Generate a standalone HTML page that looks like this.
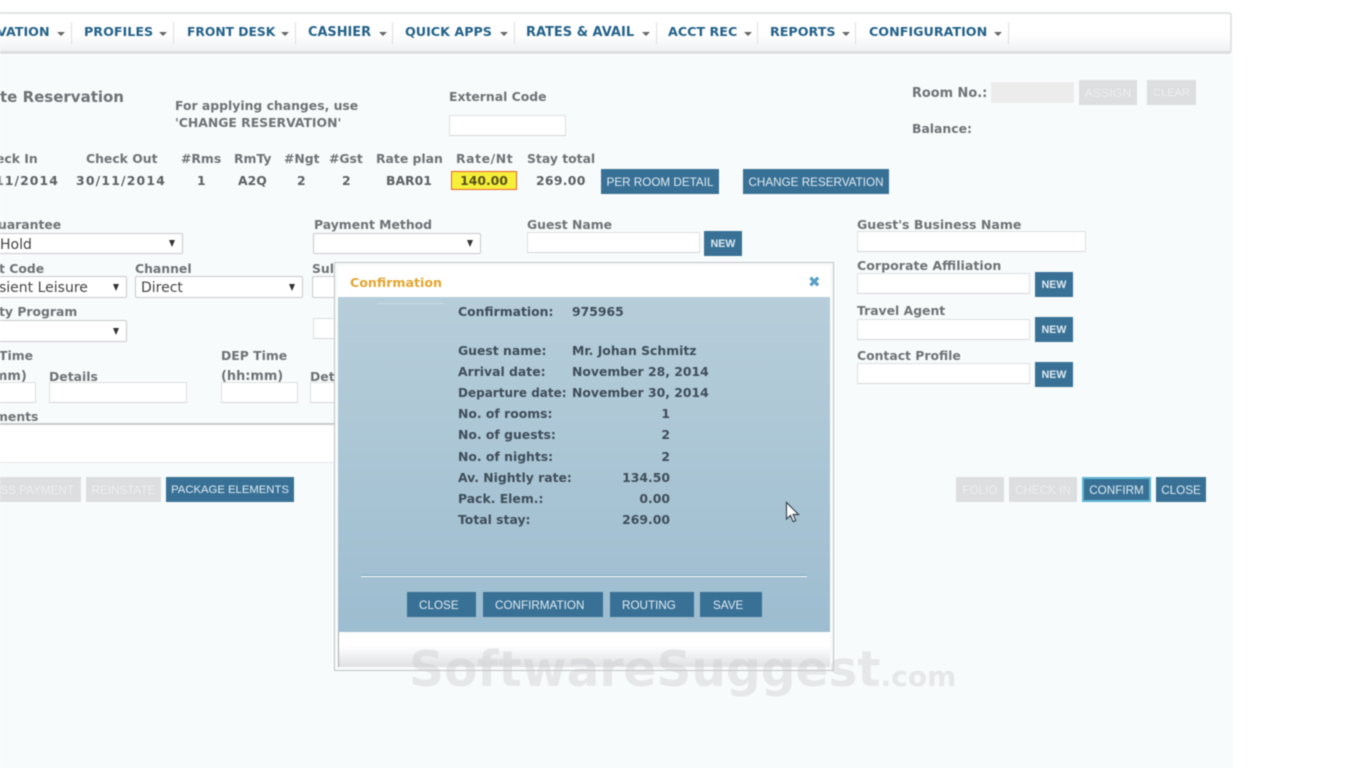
<!DOCTYPE html>
<html><head><meta charset="utf-8"><title>Reservation</title>
<style>
html,body{margin:0;padding:0;width:1366px;height:768px;overflow:hidden;background:#fff}
#p{position:absolute;left:0;top:0;width:1366px;height:768px;overflow:hidden;filter:blur(.4px);font-family:"DejaVu Sans","Liberation Sans",sans-serif}
#p div{position:absolute;box-sizing:border-box}
.t{white-space:nowrap;font-weight:bold;font-size:12.4px;line-height:14px;color:#6f7376}
.v{white-space:nowrap;font-weight:bold;font-size:12.4px;line-height:14px;color:#5d6164}
.m{white-space:nowrap;font-weight:bold;font-size:12.7px;line-height:14px;color:#24628a}
.a{width:0;height:0;border-left:4px solid transparent;border-right:4px solid transparent;border-top:4px solid #666}
.s{width:1px;height:22px;background:#dcdfe1;top:22px}
.i{background:#fff;border:1px solid #dcdfe1;border-bottom-color:#d4d7d9}
.sel{background:#fff;border:1px solid #c6c9cb;border-radius:2px;font-weight:normal;font-size:14px;line-height:22px;color:#444;white-space:nowrap;overflow:hidden}
.ar{width:0;height:0;border-left:3.5px solid transparent;border-right:3.5px solid transparent;border-top:7px solid #333}
.b{background:#397196;color:#dfeaf1;font-size:11.7px;line-height:27px;height:25px;text-align:center;white-space:nowrap;font-family:"Liberation Sans",sans-serif;overflow:hidden}
.n{font-weight:bold;font-size:10.6px}
.bd{background:#dcdedf;color:#eceeef}
.d{white-space:nowrap;font-weight:bold;font-size:12.4px;line-height:14px;color:#3f4d5a}
.r{text-align:right;width:100px}
.l{text-align:left;padding-left:12px}
</style></head><body><div id="p">
<div style="left:0;top:55px;width:1233px;height:713px;background:#f8fbfc"></div>
<div style="left:-8px;top:12px;width:1240px;height:42px;border:2px solid #e2e4e5;border-bottom:3px solid #dcdee0;border-radius:3px;background:linear-gradient(#fff 55%,#f0f1f3)"></div>

<div class="m" style="left:-3px;top:25px">VATION</div><div class="a" style="left:57px;top:32px"></div><div class="s" style="left:71px"></div>
<div class="m" style="left:84px;top:25px">PROFILES</div><div class="a" style="left:159px;top:32px"></div><div class="s" style="left:173px"></div>
<div class="m" style="left:187px;top:25px;font-size:12.3px">FRONT DESK</div><div class="a" style="left:281px;top:32px"></div><div class="s" style="left:295px"></div>
<div class="m" style="left:308px;top:26px;font-size:12.9px">CASHIER</div><div class="a" style="left:379px;top:32px"></div><div class="s" style="left:392px"></div>
<div class="m" style="left:405px;top:25px">QUICK APPS</div><div class="a" style="left:500px;top:32px"></div><div class="s" style="left:514px"></div>
<div class="m" style="left:526px;top:26px;font-size:13px">RATES &amp; AVAIL</div><div class="a" style="left:642px;top:32px"></div><div class="s" style="left:656px"></div>
<div class="m" style="left:668px;top:25px">ACCT REC</div><div class="a" style="left:744px;top:32px"></div><div class="s" style="left:757px"></div>
<div class="m" style="left:770px;top:25px">REPORTS</div><div class="a" style="left:842px;top:32px"></div><div class="s" style="left:855px"></div>
<div class="m" style="left:869px;top:25px">CONFIGURATION</div><div class="a" style="left:994px;top:32px"></div><div class="s" style="left:1008px"></div>

<div class="t" style="left:0;top:88px;font-size:15px;line-height:19px">te Reservation</div>
<div class="t" style="left:175px;top:99px">For applying changes, use</div>
<div class="t" style="left:175px;top:116px">'CHANGE RESERVATION'</div>
<div class="t" style="left:449px;top:90px">External Code</div>
<div class="i" style="left:449px;top:115px;width:117px;height:21px"></div>
<div class="t" style="left:912px;top:87px;font-size:12.9px">Room No.:</div>
<div style="left:991px;top:82px;width:83px;height:21px;background:#ececec"></div>
<div class="b bd" style="left:1079px;top:80px;width:58px;font-size:12.4px">ASSIGN</div>
<div class="b bd" style="left:1147px;top:80px;width:49px;font-size:11px">CLEAR</div>
<div class="t" style="left:912px;top:122px">Balance:</div>

<div class="t" style="left:-4px;top:152px">eck In</div>
<div class="t" style="left:86px;top:152px">Check Out</div>
<div class="t" style="left:181px;top:152px">#Rms</div>
<div class="t" style="left:234px;top:152px">RmTy</div>
<div class="t" style="left:284px;top:152px">#Ngt</div>
<div class="t" style="left:329px;top:152px">#Gst</div>
<div class="t" style="left:376px;top:152px">Rate plan</div>
<div class="t" style="left:456px;top:152px;letter-spacing:.6px">Rate/Nt</div>
<div class="t" style="left:527px;top:152px">Stay total</div>
<div class="v" style="left:-5px;top:174px;letter-spacing:1.1px">11/2014</div>
<div class="v" style="left:76px;top:174px;letter-spacing:1.2px">30/11/2014</div>
<div class="v" style="left:197px;top:174px">1</div>
<div class="v" style="left:238px;top:174px">A2Q</div>
<div class="v" style="left:297px;top:174px">2</div>
<div class="v" style="left:342px;top:174px">2</div>
<div class="v" style="left:386px;top:174px">BAR01</div>
<div class="v" style="left:451px;top:171px;width:66px;height:19px;background:#f6ef3a;border:1px solid #e8622a;color:#57521c;text-align:center;line-height:17px">140.00</div>
<div class="v" style="left:536px;top:174px;letter-spacing:.3px">269.00</div>
<div class="b" style="left:601px;top:169px;width:118px">PER ROOM DETAIL</div>
<div class="b" style="left:743px;top:169px;width:146px">CHANGE RESERVATION</div>

<div class="t" style="left:-2px;top:218px">uarantee</div>
<div class="sel" style="left:-10px;top:233px;width:193px;height:21px;padding-left:9px">Hold</div><div class="ar" style="left:169px;top:240px"></div>
<div class="t" style="left:314px;top:218px">Payment Method</div>
<div class="sel" style="left:313px;top:233px;width:168px;height:21px"></div><div class="ar" style="left:467px;top:240px"></div>
<div class="t" style="left:527px;top:218px">Guest Name</div>
<div class="i" style="left:527px;top:232px;width:173px;height:21px"></div>
<div class="b n" style="left:704px;top:231px;width:38px">NEW</div>
<div class="t" style="left:857px;top:218px;font-size:12.55px">Guest's Business Name</div>
<div class="i" style="left:857px;top:231px;width:229px;height:21px"></div>

<div class="t" style="left:-1px;top:262px">t Code</div>
<div class="sel" style="left:-10px;top:276px;width:137px;height:22px;padding-left:8px">sient Leisure</div><div class="ar" style="left:113px;top:284px"></div>
<div class="t" style="left:135px;top:262px">Channel</div>
<div class="sel" style="left:135px;top:276px;width:168px;height:22px;padding-left:5px">Direct</div><div class="ar" style="left:289px;top:284px"></div>
<div class="t" style="left:312px;top:262px">Sul</div>
<div class="sel" style="left:312px;top:276px;width:40px;height:22px"></div>
<div class="t" style="left:857px;top:259px;font-size:12.6px">Corporate Affiliation</div>
<div class="i" style="left:857px;top:273px;width:173px;height:21px"></div>
<div class="b n" style="left:1035px;top:272px;width:38px">NEW</div>

<div class="t" style="left:-1px;top:305px">ty Program</div>
<div class="sel" style="left:-10px;top:320px;width:137px;height:22px"></div><div class="ar" style="left:113px;top:328px"></div>
<div class="i" style="left:313px;top:318px;width:40px;height:21px"></div>
<div class="t" style="left:857px;top:304px">Travel Agent</div>
<div class="i" style="left:857px;top:319px;width:173px;height:21px"></div>
<div class="b n" style="left:1035px;top:317px;width:38px">NEW</div>

<div class="t" style="left:-1px;top:349px">Time</div>
<div class="t" style="left:221px;top:349px">DEP Time</div>
<div class="t" style="left:857px;top:349px">Contact Profile</div>
<div class="t" style="left:-6px;top:370px;font-size:12.9px">mm)</div>
<div class="t" style="left:49px;top:370px">Details</div>
<div class="t" style="left:221px;top:370px;font-size:12.9px">(hh:mm)</div>
<div class="t" style="left:310px;top:370px">Det</div>
<div class="i" style="left:-10px;top:382px;width:46px;height:21px"></div>
<div class="i" style="left:49px;top:382px;width:138px;height:21px"></div>
<div class="i" style="left:221px;top:382px;width:77px;height:21px"></div>
<div class="i" style="left:310px;top:382px;width:40px;height:21px"></div>
<div class="i" style="left:857px;top:363px;width:173px;height:21px"></div>
<div class="b n" style="left:1035px;top:362px;width:38px">NEW</div>

<div class="t" style="left:-5px;top:410px">ments</div>
<div style="left:0;top:423px;width:340px;height:40px;background:#fff;border-top:2px solid #c8cbcd;border-bottom:1px solid #e6e8ea"></div>

<div class="b bd" style="left:-10px;top:477px;width:91px;text-align:right;padding-right:7px">ESS PAYMENT</div>
<div class="b bd" style="left:86px;top:477px;width:75px">REINSTATE</div>
<div class="b" style="left:166px;top:477px;width:128px;font-size:11.3px">PACKAGE ELEMENTS</div>
<div class="b bd" style="left:956px;top:477px;width:48px">FOLIO</div>
<div class="b bd" style="left:1009px;top:477px;width:68px">CHECK IN</div>
<div class="b" style="left:1082px;top:477px;width:69px;border:2px solid #5fb6d3;line-height:23px">CONFIRM</div>
<div class="b" style="left:1156px;top:477px;width:50px">CLOSE</div>

<div style="left:334px;top:262px;width:500px;height:409px;background:#f8fbfc;border:1px solid #bfc2c4"></div>
<div style="left:338px;top:266px;width:492px;height:31px;background:#fff"></div>
<div style="left:338px;top:297px;width:492px;height:335px;background:linear-gradient(#b7ceda,#9dbdd0)"></div>
<div style="left:377px;top:303px;width:66px;height:1px;background:#c9dce5"></div>
<div style="left:338px;top:632px;width:492px;height:35px;background:linear-gradient(#fff 40%,#e2e3e5 95%);border-left:1px solid #aaa"></div>
<div class="t" style="left:350px;top:276px;color:#e4a530;font-size:12.6px">Confirmation</div>
<div style="left:808px;top:273px;font-size:15px;line-height:18px;font-weight:bold;color:#5b9fc8">✖</div>

<div class="d" style="left:458px;top:305px">Confirmation:</div><div class="d" style="left:572px;top:305px">975965</div>
<div class="d" style="left:458px;top:344px">Guest name:</div><div class="d" style="left:572px;top:344px">Mr. Johan Schmitz</div>
<div class="d" style="left:458px;top:365px">Arrival date:</div><div class="d" style="left:572px;top:365px">November 28, 2014</div>
<div class="d" style="left:458px;top:386px;font-size:12px">Departure date:</div><div class="d" style="left:572px;top:386px">November 30, 2014</div>
<div class="d" style="left:458px;top:407px">No. of rooms:</div><div class="d r" style="left:570px;top:407px">1</div>
<div class="d" style="left:458px;top:428px">No. of guests:</div><div class="d r" style="left:570px;top:428px">2</div>
<div class="d" style="left:458px;top:450px">No. of nights:</div><div class="d r" style="left:570px;top:450px">2</div>
<div class="d" style="left:458px;top:471px">Av. Nightly rate:</div><div class="d r" style="left:570px;top:471px">134.50</div>
<div class="d" style="left:458px;top:492px">Pack. Elem.:</div><div class="d r" style="left:570px;top:492px">0.00</div>
<div class="d" style="left:458px;top:513px">Total stay:</div><div class="d r" style="left:570px;top:513px">269.00</div>

<div style="left:361px;top:576px;width:446px;height:1px;background:#fff;box-shadow:0 -1px 0 #7ba5bf"></div>
<div class="b l" style="left:407px;top:592px;width:69px">CLOSE</div>
<div class="b l" style="left:483px;top:592px;width:120px">CONFIRMATION</div>
<div class="b l" style="left:610px;top:592px;width:84px">ROUTING</div>
<div class="b l" style="left:700px;top:592px;width:62px;padding-left:13px">SAVE</div>

<svg style="position:absolute;left:785px;top:501px" width="16" height="24" viewBox="0 0 16 24"><path d="M1.5 1.5V18l4-3.6 2.6 6.2 2.6-1.1-2.6-6H13.5Z" fill="#fff" stroke="#3c4650" stroke-width="1.2"/></svg>

<div style="left:409px;top:640px;white-space:nowrap;font-family:'DejaVu Sans',sans-serif;font-weight:bold;font-size:48.6px;line-height:60px;color:rgba(200,202,205,.4)">SoftwareSuggest<span style="font-size:28px">.com</span></div>
</div></body></html>
